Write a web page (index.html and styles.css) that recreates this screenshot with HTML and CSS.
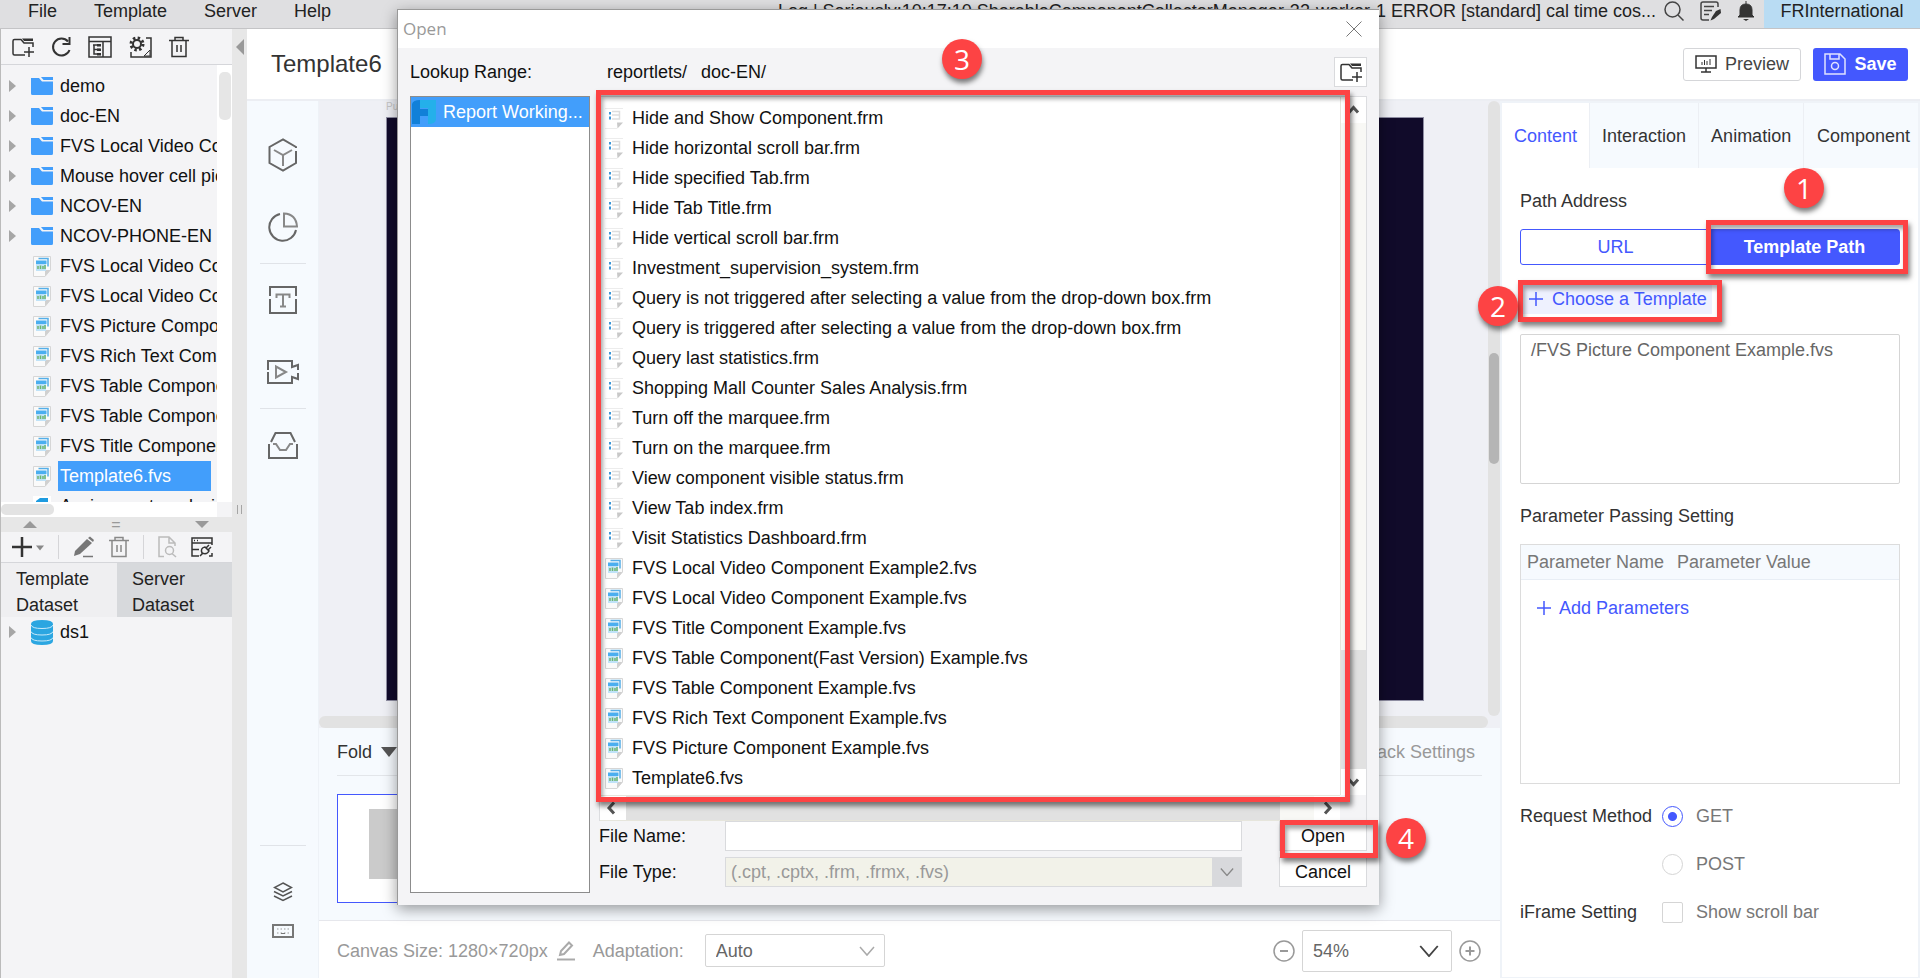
FILE: index.html
```html
<!DOCTYPE html>
<html lang="en">
<head>
    <meta charset="UTF-8">
    <meta name="viewport" content="width=device-width, initial-scale=1.0">
    <title>Template6 - Designer</title>
    <link rel="stylesheet" href="styles.css">
</head>
<body>

<!-- Shared icons -->
<svg class="sprite" aria-hidden="true">
    <symbol id="i-newfolder" viewBox="0 0 22 20">
        <path d="M13 18H2.500Q1 18 1 16.500V4Q1 2.500 2.500 2.500H9L12 6H21V10" fill="none" stroke="currentColor" stroke-width="1.500"/>
        <path d="M10 1.500H21V4H12z" fill="currentColor"/>
        <path d="M17 10V20M12 15H22" fill="none" stroke="currentColor" stroke-width="1.500"/>
    </symbol>
    <symbol id="i-trash" viewBox="0 0 20 22">
        <path d="M0 4.500H20M6 4V1.500H14V4M3 5V20.500H17V5M8 9V16M12 9V16" fill="none" stroke="currentColor" stroke-width="1.500"/>
    </symbol>
    <symbol id="i-folder" viewBox="0 0 22 18">
        <path d="M0 1H8L11 4.500H22V16.500Q22 18 20.500 18H1.500Q0 18 0 16.500z" fill="#429efb"/>
        <path d="M10 0H22V3H12.500z" fill="#429efb"/>
    </symbol>
    <symbol id="i-fvs" viewBox="0 0 18 21">
        <path d="M.5 .5H17.500V14L12 20.500H.5z" fill="#fafafa" stroke="#d6d6d6"/>
        <path d="M17.500 14H12V20.500z" fill="#d0d0d0"/>
        <path d="M5.500 2.500H15V10.500" fill="none" stroke="#55aee8" stroke-width="1.500"/>
        <path d="M3 5H13V15H3z" fill="#bfe2f8"/>
        <path d="M3 4.500H13.500V8H3z" fill="#4aaef0"/>
        <path d="M5 13V10M7.500 13V9.500M10 13V10M12 13V9" stroke="#6fb56f" stroke-width="1.500"/>
    </symbol>
    <symbol id="i-frm" viewBox="0 0 18 21">
        <path d="M0 .5H18M0 20.500H12" stroke="#ececec"/>
        <path d="M12 14.500H18L12.500 20.500z" fill="#c9c9c9"/>
        <path d="M7 3.500H14.500V11H7M7 7H14.500" fill="none" stroke="#dedede" stroke-width="1.500"/>
        <path d="M4 4H6V6.500H4zM4 8.500H6V11.500H4z" fill="#3d97d8"/>
    </symbol>
    <symbol id="i-chevron" viewBox="0 0 16 10">
        <path d="M1 1L8 9L15 1" fill="none" stroke="currentColor" stroke-width="1.500"/>
    </symbol>
    <symbol id="i-plus" viewBox="0 0 16 16">
        <path d="M8 1V15M1 8H15" fill="none" stroke="currentColor" stroke-width="1.500"/>
    </symbol>
</svg>

<div class="app">

<header class="menubar">
    <nav class="menu">
        <button>File</button>
        <button>Template</button>
        <button>Server</button>
        <button>Help</button>
    </nav>
    <span class="log">Log | Seriously:10:17:10 SharableComponentCollectorManager-32-worker-1 ERROR [standard] cal time cos...</span>
    <svg class="menu-icon" width="20" height="20" viewBox="0 0 20 20"><circle cx="8.500" cy="8.500" r="7.500" fill="none" stroke="#444" stroke-width="1.500"/><path d="M14 14L19.500 19.500" stroke="#444" stroke-width="1.500"/></svg>
    <svg class="menu-icon" width="22" height="20" viewBox="0 0 22 20"><path d="M18 6V3Q18 1 16 1H3Q1 1 1 3V17Q1 19 3 19H9M4 5.500H14M4 9.500H12M4 13.500H9" fill="none" stroke="#444" stroke-width="1.500"/><path d="M20.500 8L21 12L14 18L10.500 19.500L12 16L16 10z" fill="#333"/></svg>
    <svg class="menu-icon" width="16" height="20" viewBox="0 0 16 20"><path d="M8 0V3M2 14V9Q2 3 8 3Q14 3 14 9V14L16 16H0L2 14z" fill="#333" stroke="#333"/><path d="M5 18H11L8 20z" fill="#333"/></svg>
    <button class="account">FRInternational</button>
</header>

<div class="workspace">

    <aside class="sidebar">
        <div class="toolbar">
            <svg width="22" height="20"><use href="#i-newfolder"/></svg>
            <svg width="20" height="22" viewBox="0 0 20 22"><path d="M17 5.500A8.500 8.500 0 1 0 18.500 14" fill="none" stroke="#333" stroke-width="2"/><path d="M18.500 1V8H11.500" fill="none" stroke="#333" stroke-width="2"/></svg>
            <svg width="24" height="22" viewBox="0 0 24 22"><path d="M1 1H23V21H1zM1 5.500H23M5 9H12M6 9V18H12M6 13.500H12M15 5V21" fill="none" stroke="#333" stroke-width="1.500"/><path d="M9 8H13V10.500H9zM9 12.500H13V15H9zM9 17H13V19.500H9z" fill="#333"/></svg>
            <svg width="23" height="22" viewBox="0 0 23 22"><circle cx="8" cy="8" r="4" fill="none" stroke="#333" stroke-width="2"/><circle cx="8" cy="8" r="6" fill="none" stroke="#333" stroke-width="3" stroke-dasharray="2.400 2.300"/><path d="M17 2H22V21H2V16" fill="none" stroke="#333" stroke-width="1.500"/><path d="M15 20L21 14V20z" fill="none" stroke="#333"/></svg>
            <svg width="20" height="22"><use href="#i-trash"/></svg>
        </div>

        <div class="tree-box">
            <ul class="tree">
                <li class="open-arrow"><svg width="22" height="18"><use href="#i-folder"/></svg><span>demo</span></li>
                <li class="open-arrow"><svg width="22" height="18"><use href="#i-folder"/></svg><span>doc-EN</span></li>
                <li class="open-arrow"><svg width="22" height="18"><use href="#i-folder"/></svg><span>FVS Local Video Component</span></li>
                <li class="open-arrow"><svg width="22" height="18"><use href="#i-folder"/></svg><span>Mouse hover cell pictures</span></li>
                <li class="open-arrow"><svg width="22" height="18"><use href="#i-folder"/></svg><span>NCOV-EN</span></li>
                <li class="open-arrow"><svg width="22" height="18"><use href="#i-folder"/></svg><span>NCOV-PHONE-EN</span></li>
                <li><svg width="22" height="21"><use href="#i-fvs"/></svg><span>FVS Local Video Component Example2.fvs</span></li>
                <li><svg width="22" height="21"><use href="#i-fvs"/></svg><span>FVS Local Video Component Example.fvs</span></li>
                <li><svg width="22" height="21"><use href="#i-fvs"/></svg><span>FVS Picture Component Example.fvs</span></li>
                <li><svg width="22" height="21"><use href="#i-fvs"/></svg><span>FVS Rich Text Component Example.fvs</span></li>
                <li><svg width="22" height="21"><use href="#i-fvs"/></svg><span>FVS Table Component(Fast Version) Example.fvs</span></li>
                <li><svg width="22" height="21"><use href="#i-fvs"/></svg><span>FVS Table Component Example.fvs</span></li>
                <li><svg width="22" height="21"><use href="#i-fvs"/></svg><span>FVS Title Component Example.fvs</span></li>
                <li class="selected"><svg width="22" height="21"><use href="#i-fvs"/></svg><span>Template6.fvs</span></li>
                <li><svg width="22" height="21" viewBox="0 0 22 21"><path d="M2 0H20V21H2z" fill="#fff"/><path d="M5 5L9 2H17V19H5z" fill="#1e9be0"/></svg><span>Assignment analysis.cpt</span></li>
            </ul>
            <div class="vbar"><i></i></div>
            <div class="hbar"><i></i></div>
        </div>

        <div class="divider"><i class="up"></i><b>=</b><i class="down"></i></div>

        <div class="toolbar dataset-tools">
            <svg width="32" height="22" viewBox="0 0 32 22"><path d="M10 1V21M0 11H20" stroke="#333" stroke-width="2.500"/><path d="M24 9.500H32L28 14.500z" fill="#888"/></svg>
            <span class="sep"></span>
            <svg width="22" height="22" viewBox="0 0 22 22"><path d="M2 15L14 3L19 7L7 18L1 20z" fill="#777"/><path d="M15 2L17 .5L21 4L20 6z" fill="#777"/><path d="M10 20.500H20" stroke="#777" stroke-width="1.500"/></svg>
            <svg class="dim" width="20" height="22"><use href="#i-trash"/></svg>
            <span class="sep"></span>
            <svg width="19" height="22" viewBox="0 0 19 22"><path d="M6 20.500H1V1H11L17 7V10M11 1V7H17" fill="none" stroke="#bbb" stroke-width="1.500"/><circle cx="11.500" cy="14.500" r="4" fill="none" stroke="#bbb" stroke-width="1.500"/><path d="M14 17.500L18 21" stroke="#bbb" stroke-width="1.500"/></svg>
            <svg width="22" height="20" viewBox="0 0 22 20"><path d="M8 19H1V1H21V8M1 6H21M1 12.500H8M3 3.500H4M6 3.500H7" fill="none" stroke="#333" stroke-width="1.500"/><path d="M11 16Q9 11 14 10L18 14Q16 18 11 16z" fill="none" stroke="#333" stroke-width="1.500"/><path d="M15 11L18 8M17 13L20 10M9 19L12 16M18 19H21V16" fill="none" stroke="#333" stroke-width="1.500"/></svg>
        </div>

        <div class="dataset-tabs">
            <button class="active">Template Dataset</button>
            <button>Server Dataset</button>
        </div>
        <ul class="tree">
            <li class="open-arrow"><svg width="22" height="25" viewBox="0 0 22 25"><path d="M0 4Q0 0 11 0Q22 0 22 4V21Q22 25 11 25Q0 25 0 21z" fill="#2ba6e1"/><path d="M0 5Q1 8.500 11 8.500Q21 8.500 22 5M0 11.500Q1 15 11 15Q21 15 22 11.500M0 17.500Q1 21 11 21Q21 21 22 17.500" fill="none" stroke="#c9eafa"/></svg><span>ds1</span></li>
        </ul>
    </aside>

    <div class="splitter">
        <i class="collapse"></i>
        <b></b>
    </div>

    <div class="designer">
        <div class="titlebar">
            <h1>Template6</h1>
            <button class="preview"><svg width="22" height="18" viewBox="0 0 22 18"><path d="M1 1H21V13H1zM11 13V17M6 17H16" fill="none" stroke="#333" stroke-width="1.500"/><path d="M7 10V7M9.500 10V5M12 10V6M15 10V4" stroke="#333"/></svg>Preview</button>
            <button class="save"><svg width="22" height="22" viewBox="0 0 22 22"><path d="M1 1H16L21 6V21H1zM6 1V6H15V1" fill="none" stroke="#dfe2ff" stroke-width="1.500"/><circle cx="11" cy="13" r="3.500" fill="none" stroke="#dfe2ff" stroke-width="1.500"/></svg>Save</button>
        </div>

        <div class="design-body">
            <div class="component-bar">
                <div class="tool"><svg width="30" height="34" viewBox="0 0 30 34" fill="none" stroke="#666" stroke-width="2"><path d="M28 13V25L15 32.500L1.500 25V9L15 1.500L28 9V10"/><path d="M6 12L15 17L24 12M15 17V28" stroke="#888"/></svg></div>
                <div class="tool"><svg width="30" height="30" viewBox="0 0 30 30" fill="none" stroke="#666" stroke-width="2"><path d="M12 2A13.500 13.500 0 1 0 28 18"/><path d="M16 1.500Q28 2 29 14.500H16z" stroke="#888"/></svg></div>
                <hr>
                <div class="tool"><svg width="28" height="28" viewBox="0 0 28 28" fill="none" stroke="#666" stroke-width="2"><path d="M1 10V1H27V10M1 13V27H27V13"/><path d="M7.500 12V8.500H20.500V12M14 8.500V20M11 20.500H17" stroke="#888"/></svg></div>
                <div class="tool"><svg width="32" height="24" viewBox="0 0 32 24" fill="none" stroke="#666" stroke-width="2"><path d="M1 10V1H25V7L31 5V10M1 12V23H25V17L31 19V13"/><path d="M9 6.500V17.500L19 12z" stroke="#888"/></svg></div>
                <hr>
                <div class="tool"><svg width="30" height="27" viewBox="0 0 30 27" fill="none" stroke="#666" stroke-width="2"><path d="M3 10L7.500 1H22.500L27 10M1 12V26H29V12"/><path d="M5 12H8L12 18H18L22 12H25" stroke="#888"/></svg></div>
                <hr class="push">
                <div class="tool small"><svg width="20" height="20" viewBox="0 0 20 20" fill="none" stroke="#555" stroke-width="1.500"><path d="M10 1L18.500 5.500L10 10L1.500 5.500zM1 9.500L10 14L19 9.500M1 14L10 18.500L19 14"/></svg></div>
                <div class="tool small"><svg width="22" height="14" viewBox="0 0 22 14" fill="none" stroke="#777"><path d="M1 1H21V13H1z" stroke-width="2"/><path d="M5 5H17M5 9H17" stroke="#999" stroke-dasharray="1.500 2"/><path d="M9 9.500H13"/></svg></div>
            </div>

            <main class="center">
                <div class="canvas-area">
                    <div class="stage">
                        <span class="ruler">Pu</span>
                        <div class="canvas"></div>
                    </div>
                    <div class="scroll-v"><i></i></div>
                    <div class="scroll-h"></div>
                </div>

                <section class="pages">
                    <div class="pages-head">
                        <button class="fold">Fold <i></i></button>
                        <button class="playback">Playback Settings</button>
                    </div>
                    <div class="page-thumb"><div></div></div>
                </section>

                <footer class="statusbar">
                    <span>Canvas Size: 1280×720px</span>
                    <svg width="20" height="20" viewBox="0 0 20 20" fill="none" stroke="#aaa" stroke-width="2"><path d="M1 18.500H19"/><path d="M4 14L5 10L13 1.500L16 4.500L8 13z"/></svg>
                    <label for="adaptation">Adaptation:</label>
                    <span class="select adaptation"><select id="adaptation"><option>Auto</option></select><svg width="16" height="11"><use href="#i-chevron"/></svg></span>
                    <svg class="zoom-out" width="22" height="22" viewBox="0 0 22 22" fill="none" stroke="#999" stroke-width="1.500"><circle cx="11" cy="11" r="10"/><path d="M7 11H15" stroke-width="2"/></svg>
                    <span class="select zoom"><select aria-label="Zoom"><option>54%</option></select><svg width="20" height="13"><use href="#i-chevron"/></svg></span>
                    <svg width="22" height="22" viewBox="0 0 22 22" fill="none" stroke="#999" stroke-width="1.500"><circle cx="11" cy="11" r="10"/><path d="M6.500 11H15.500M11 6.500V15.500" stroke-width="2"/></svg>
                </footer>
            </main>

            <aside class="props">
                <div class="prop-tabs">
                    <button class="active">Content</button>
                    <button>Interaction</button>
                    <button>Animation</button>
                    <button>Component</button>
                </div>
                <div class="prop-body">
                    <label for="path">Path Address</label>
                    <div class="segmented">
                        <button>URL</button>
                        <button class="active">Template Path</button>
                        <div class="mark mark-1"></div>
                    </div>
                    <span class="callout callout-1">1</span>
                    <div class="choose-row">
                        <button class="choose"><svg width="16" height="16"><use href="#i-plus"/></svg>Choose a Template</button>
                        <div class="mark mark-2"></div>
                        <span class="callout callout-2">2</span>
                    </div>
                    <textarea id="path">/FVS Picture Component Example.fvs</textarea>
                    <h2>Parameter Passing Setting</h2>
                    <div class="params">
                        <table>
                            <thead>
                                <tr><th>Parameter Name</th><th>Parameter Value</th></tr>
                            </thead>
                        </table>
                        <button><svg width="16" height="16"><use href="#i-plus"/></svg>Add Parameters</button>
                    </div>
                    <div class="options">
                        <span>Request Method</span>
                        <label><input type="radio" name="method" checked>GET</label>
                        <label class="second"><input type="radio" name="method">POST</label>
                        <span>iFrame Setting</span>
                        <label><input type="checkbox">Show scroll bar</label>
                    </div>
                </div>
            </aside>
        </div>
    </div>
</div>
</div>

<!-- Open template dialog -->
<div class="dialog" role="dialog" aria-label="Open">
    <div class="dialog-title">
        <span>Open</span>
        <button aria-label="Close"><svg width="16" height="16" viewBox="0 0 16 16"><path d="M.5 .5L15.500 15.500M15.500 .5L.5 15.500" stroke="#777"/></svg></button>
    </div>
    <div class="dialog-body">
        <div class="lookup">
            <span class="lookup-label">Lookup Range:</span>
            <a href="#">reportlets/</a>
            <a href="#">doc-EN/</a>
            <button aria-label="New folder"><svg width="22" height="20"><use href="#i-newfolder"/></svg></button>
        </div>
        <div class="dialog-main">
            <ul class="roots">
                <li><svg width="24" height="24" viewBox="0 0 24 24"><path d="M0 4Q1 0 8 0V9H16V16H8V24H0z" fill="#1180d8"/><path d="M8 0H24V19Q24 24 16 24V8H8z" fill="#24b0ea"/></svg><span>Report Working...</span></li>
            </ul>
            <div class="files">
                <div class="file-box">
                    <ul class="file-list">
                        <li><svg width="18" height="21"><use href="#i-frm"/></svg>Hide and Show Component.frm</li>
                        <li><svg width="18" height="21"><use href="#i-frm"/></svg>Hide horizontal scroll bar.frm</li>
                        <li><svg width="18" height="21"><use href="#i-frm"/></svg>Hide specified Tab.frm</li>
                        <li><svg width="18" height="21"><use href="#i-frm"/></svg>Hide Tab Title.frm</li>
                        <li><svg width="18" height="21"><use href="#i-frm"/></svg>Hide vertical scroll bar.frm</li>
                        <li><svg width="18" height="21"><use href="#i-frm"/></svg>Investment_supervision_system.frm</li>
                        <li><svg width="18" height="21"><use href="#i-frm"/></svg>Query is not triggered after selecting a value from the drop-down box.frm</li>
                        <li><svg width="18" height="21"><use href="#i-frm"/></svg>Query is triggered after selecting a value from the drop-down box.frm</li>
                        <li><svg width="18" height="21"><use href="#i-frm"/></svg>Query last statistics.frm</li>
                        <li><svg width="18" height="21"><use href="#i-frm"/></svg>Shopping Mall Counter Sales Analysis.frm</li>
                        <li><svg width="18" height="21"><use href="#i-frm"/></svg>Turn off the marquee.frm</li>
                        <li><svg width="18" height="21"><use href="#i-frm"/></svg>Turn on the marquee.frm</li>
                        <li><svg width="18" height="21"><use href="#i-frm"/></svg>View component visible status.frm</li>
                        <li><svg width="18" height="21"><use href="#i-frm"/></svg>View Tab index.frm</li>
                        <li><svg width="18" height="21"><use href="#i-frm"/></svg>Visit Statistics Dashboard.frm</li>
                        <li><svg width="18" height="21"><use href="#i-fvs"/></svg>FVS Local Video Component Example2.fvs</li>
                        <li><svg width="18" height="21"><use href="#i-fvs"/></svg>FVS Local Video Component Example.fvs</li>
                        <li><svg width="18" height="21"><use href="#i-fvs"/></svg>FVS Title Component Example.fvs</li>
                        <li><svg width="18" height="21"><use href="#i-fvs"/></svg>FVS Table Component(Fast Version) Example.fvs</li>
                        <li><svg width="18" height="21"><use href="#i-fvs"/></svg>FVS Table Component Example.fvs</li>
                        <li><svg width="18" height="21"><use href="#i-fvs"/></svg>FVS Rich Text Component Example.fvs</li>
                        <li><svg width="18" height="21"><use href="#i-fvs"/></svg>FVS Picture Component Example.fvs</li>
                        <li><svg width="18" height="21"><use href="#i-fvs"/></svg>Template6.fvs</li>
                    </ul>
                    <div class="file-vbar">
                        <svg width="25" height="26" viewBox="0 0 25 26"><path d="M8 15.500L12.500 10.500L17 15.500" fill="none" stroke="#555" stroke-width="3"/></svg>
                        <i></i>
                        <svg width="25" height="26" viewBox="0 0 25 26"><path d="M8 10.500L12.500 15.500L17 10.500" fill="none" stroke="#555" stroke-width="3"/></svg>
                    </div>
                    <div class="file-hbar">
                        <svg width="26" height="24" viewBox="0 0 26 24"><path d="M14 6.500L9 12L14 17.500" fill="none" stroke="#555" stroke-width="3"/></svg>
                        <i></i>
                        <svg width="26" height="24" viewBox="0 0 26 24"><path d="M11 6.500L16 12L11 17.500" fill="none" stroke="#555" stroke-width="3"/></svg>
                    </div>
                    <div class="mark mark-3"></div>
                </div>
                <div class="fields">
                    <label for="file-name">File Name:</label>
                    <input type="text" id="file-name">
                    <div class="open-cell">
                        <button>Open</button>
                        <div class="mark mark-4"></div>
                        <span class="callout callout-4">4</span>
                    </div>
                    <label for="file-type">File Type:</label>
                    <span class="select file-type"><select id="file-type" disabled><option>(.cpt, .cptx, .frm, .frmx, .fvs)</option></select><svg width="14" height="9"><use href="#i-chevron"/></svg></span>
                    <button>Cancel</button>
                </div>
            </div>
        </div>
    </div>
    <span class="callout callout-3">3</span>
</div>

</body>
</html>
```
FILE: styles.css
```css
* {
    box-sizing: border-box;
}
body {
    margin: 0;
    font-family: "Liberation Sans", Arial, sans-serif;
    font-size: 18px;
    line-height: 20px;
    color: #222;
    position: relative;
    overflow: hidden;
}
button, input, select, textarea {
    font: inherit;
    color: inherit;
    margin: 0;
}
button {
    background: none;
    border: none;
    padding: 0;
    cursor: pointer;
}
ul {
    list-style: none;
    margin: 0;
    padding: 0;
}
svg {
    display: block;
    flex: none;
}
.sprite {
    position: absolute;
    width: 0;
    height: 0;
}
.app {
    display: flex;
    flex-direction: column;
    height: 100vh;
}

/* Menu bar */
.menubar {
    display: flex;
    align-items: center;
    height: 29px;
    flex: none;
    background-color: #dfdfe1;
    border-bottom: 1px solid #c4c4c6;
}
.menu {
    display: flex;
    gap: 37px;
    padding-left: 28px;
    flex: 1;
}
.menu button, .log, .menu-icon {
    margin-bottom: 7px;
}
.log {
    white-space: nowrap;
}
.menu-icon {
    margin-left: 8px;
}
.menu-icon + .menu-icon {
    margin-left: 16px;
}
.account {
    align-self: stretch;
    width: 156px;
    margin-left: 10px;
    padding-bottom: 7px;
    background-color: #b9dcf3;
}

.workspace {
    display: flex;
    flex: 1;
    min-height: 0;
}

/* Left sidebar */
.sidebar {
    width: 232px;
    flex: none;
    background-color: #f4f4f6;
    border-left: 1px solid #bbb;
}
.toolbar {
    display: flex;
    align-items: center;
    gap: 17px;
    height: 36px;
    padding-left: 11px;
    border-bottom: 1px solid #d5d6da;
    color: #333;
}
.tree-box {
    display: grid;
    grid-template-columns: 1fr 15px;
    grid-template-rows: 437px 15px;
}
.tree-box .tree {
    padding-top: 6px;
}
.tree {
    overflow: hidden;
}
.tree li {
    display: flex;
    align-items: center;
    height: 30px;
    padding-left: 30px;
    white-space: nowrap;
    color: #111;
}
.tree li.open-arrow {
    padding-left: 8px;
}
.tree li.open-arrow::before {
    content: "";
    border: 6px solid transparent;
    border-left: 7px solid #a6a6a6;
    border-right-width: 0;
    margin-right: 15px;
}
.tree li span {
    padding: 5px 0 5px 2px;
    margin-left: 5px;
}
.tree li.selected span {
    background-color: #429efb;
    color: #fff;
    width: 153px;
}
.vbar {
    background-color: #fff;
    padding: 7px 1px 0 2px;
}
.vbar i {
    display: block;
    height: 48px;
    border-radius: 5px;
    background-color: #e6e6e6;
}
.hbar {
    background-color: #fff;
    padding: 2px 0;
}
.hbar i {
    display: block;
    width: 53px;
    height: 11px;
    border-radius: 5px;
    background-color: #e3e3e3;
}
.divider {
    display: flex;
    justify-content: space-between;
    align-items: center;
    height: 15px;
    padding: 0 23px 0 22px;
    background-color: #e7e7e7;
    color: #999;
    font-size: 16px;
}
.divider b {
    font-weight: normal;
}
.up, .down {
    border: 7px solid transparent;
}
.up {
    border-top-width: 0;
    border-bottom-color: #999;
}
.down {
    border-bottom-width: 0;
    border-top-color: #999;
}
.dataset-tools {
    height: 31px;
    gap: 14px;
}
.dim {
    color: #888;
}
.sep {
    width: 1px;
    height: 24px;
    background-color: #d5d5d8;
}
.dataset-tabs {
    display: grid;
    grid-template-columns: 116px 1fr;
}
.dataset-tabs button {
    height: 54px;
    background-color: #d7d9dc;
    padding: 3px 30px 0 15px;
    text-align: left;
    line-height: 26px;
}
.dataset-tabs .active {
    background-color: #efeff1;
}

.splitter {
    display: flex;
    flex-direction: column;
    justify-content: space-between;
    align-items: center;
    width: 15px;
    flex: none;
    background-color: #e7e7e7;
    padding: 10px 0 464px;
}
.collapse {
    border: 8px solid transparent;
    border-left-width: 0;
    border-right-color: #999;
}
.splitter b {
    width: 5px;
    height: 9px;
    border: 1px solid #a5a5a5;
    border-width: 0 1px;
}

/* Designer */
.designer {
    flex: 1;
    min-width: 0;
    display: flex;
    flex-direction: column;
    background-color: #fff;
}
.titlebar {
    display: flex;
    align-items: center;
    gap: 12px;
    height: 72px;
    flex: none;
    padding: 0 12px 0 24px;
    border-bottom: 2px solid #eceef3;
}
.titlebar h1 {
    flex: 1;
    margin: 0;
    font-size: 24px;
    font-weight: normal;
    color: #333;
}
.preview, .save {
    display: flex;
    align-items: center;
    justify-content: center;
    gap: 8px;
    height: 33px;
    border-radius: 3px;
}
.preview {
    width: 118px;
    border: 1px solid #d5d6d9;
    color: #444;
}
.save {
    width: 95px;
    background-color: #4458fe;
    color: #fff;
    font-weight: bold;
}
.design-body {
    display: flex;
    flex: 1;
    min-height: 0;
}
.component-bar {
    display: flex;
    flex-direction: column;
    align-items: center;
    width: 72px;
    flex: none;
    padding: 18px 0 28px;
    background-color: #f6fafe;
    border-right: 1px solid #eef2f7;
}
.tool {
    display: flex;
    align-items: center;
    justify-content: center;
    height: 72px;
}
.tool.small {
    height: 39px;
}
.component-bar hr {
    width: 46px;
    margin: 0;
    border: none;
    border-top: 1px solid #e0e3e8;
}
.component-bar hr.push {
    margin-top: auto;
    margin-bottom: 26px;
}
.center {
    flex: 1;
    min-width: 0;
    display: flex;
    flex-direction: column;
}
.canvas-area {
    display: grid;
    grid-template-columns: 1fr 12px;
    grid-template-rows: 1fr 12px;
    flex: 1;
    background-color: #eff0f5;
}
.stage {
    display: flex;
    flex-direction: column;
    padding: 0 64px 15px 67px;
}
.ruler {
    height: 16px;
    line-height: 12px;
    font-size: 10px;
    color: #c5c5c5;
}
.canvas {
    flex: 1;
    background-color: #110b2a;
    border: 1px solid #8f8ea3;
}
.scroll-v, .scroll-h {
    background-color: #e2e2e2;
    border-radius: 6px;
}
.scroll-v {
    padding: 252px 1px 0;
}
.scroll-v i {
    display: block;
    height: 111px;
    border-radius: 5px;
    background-color: #b5b5b5;
}
.pages {
    height: 192px;
    flex: none;
    padding: 0 18px;
    background-color: #f6fafe;
}
.pages-head {
    display: flex;
    justify-content: space-between;
    align-items: center;
    height: 48px;
    border-bottom: 1px solid #e3e6ea;
}
.fold {
    display: flex;
    align-items: center;
    gap: 9px;
    color: #333;
}
.fold i {
    border: 8px solid transparent;
    border-top: 10px solid #555;
    border-bottom-width: 0;
}
.playback {
    color: #999;
    padding-right: 7px;
}
.page-thumb {
    width: 192px;
    height: 109px;
    margin-top: 18px;
    padding: 14px 31px 22px;
    background-color: #fff;
    border: 1px solid #4458fe;
}
.page-thumb div {
    height: 70px;
    background-color: #cbcbcb;
}
.statusbar {
    display: flex;
    align-items: center;
    height: 58px;
    flex: none;
    padding: 2px 19px 0 18px;
    border-top: 1px solid #e6e7ec;
    color: #999;
}
.statusbar svg {
    margin: 0 8px;
}
.statusbar label {
    margin-left: 9px;
    margin-right: 21px;
}
.select {
    position: relative;
    display: block;
}
.select select {
    display: block;
    width: 100%;
    height: 100%;
    appearance: none;
    background-color: #fff;
    border: 1px solid #d5d5d5;
    border-radius: 2px;
    padding: 0 10px;
    color: #666;
    opacity: 1;
}
.select svg {
    position: absolute;
    top: 50%;
    right: 10px;
    transform: translateY(-50%);
    margin: 0;
    color: #aaa;
    pointer-events: none;
}
.adaptation {
    width: 180px;
    height: 33px;
}
.zoom {
    width: 150px;
    height: 42px;
}
.zoom svg {
    right: 13px;
    color: #444;
}
.statusbar .zoom-out {
    margin-left: auto;
    margin-right: 7px;
}
.statusbar > svg:last-child {
    margin: 0 0 0 7px;
}

/* Right properties panel */
.props {
    width: 420px;
    flex: none;
    border: 2px solid #eff3f8;
    border-bottom-width: 1px;
}
.prop-tabs {
    display: flex;
    height: 65px;
    background-color: #f6fafe;
}
.prop-tabs button {
    padding: 0 12px;
    border-right: 1px solid #eceff4;
    color: #333;
}
.prop-tabs button:last-child {
    flex: 1;
    border: none;
    padding: 0 0 0 5px;
}
.prop-tabs .active {
    background-color: #fff;
    color: #4458fe;
}
.prop-body {
    position: relative;
    display: flex;
    flex-direction: column;
    padding: 23px 18px 0;
    color: #333;
}
.segmented {
    position: relative;
    display: grid;
    grid-template-columns: 1fr 1fr;
    height: 36px;
    margin: 18px 0 20px;
    border: 1px solid #4458fe;
    border-radius: 3px;
    color: #4458fe;
}
.segmented .active {
    background-color: #4458fe;
    color: #fff;
    font-weight: bold;
}
.choose-row {
    position: relative;
}
.choose {
    display: flex;
    align-items: center;
    gap: 8px;
    height: 29px;
    padding: 0 5px 2px 8px;
    background-color: #eef1fe;
    color: #4458fe;
}
.prop-body textarea {
    height: 150px;
    margin: 20px 0 22px;
    padding: 5px 10px;
    border: 1px solid #d5d5d5;
    border-radius: 2px;
    resize: none;
    color: #666;
}
.prop-body h2 {
    margin: 0 0 18px;
    font-size: 18px;
    font-weight: normal;
}
.params {
    height: 240px;
    border: 1px solid #dcdcdc;
    color: #777;
}
.params table {
    width: 100%;
    border-collapse: collapse;
    background-color: #f6fafe;
    border-bottom: 1px solid #e8eef5;
}
.params th {
    height: 34px;
    padding: 0 0 0 6px;
    font-weight: normal;
    text-align: left;
}
.params th:first-child {
    width: 150px;
}
.params button {
    display: flex;
    align-items: center;
    gap: 7px;
    margin: 18px 0 0 15px;
    color: #4458fe;
}
.options {
    display: grid;
    grid-template-columns: 142px 1fr;
    align-items: center;
    grid-auto-rows: 48px;
    margin-top: 8px;
}
.options label {
    display: flex;
    align-items: center;
    gap: 13px;
    color: #777;
}
.options .second {
    grid-column: 2;
}
.options input {
    appearance: none;
    width: 21px;
    height: 21px;
    border: 1px solid #d5d5d5;
    border-radius: 2px;
    background-color: #fff;
}
.options input[type="radio"] {
    border-radius: 50%;
}
.options input[type="radio"]:checked {
    border-color: #4458fe;
    background: radial-gradient(circle, #4458fe 4px, #fff 5px);
}

/* Open dialog */
.dialog {
    position: absolute;
    left: 397px;
    top: 9px;
    width: 982px;
    background-color: #f4f4f6;
    border: 1px solid #999;
    border-width: 1px 0 0 1px;
    box-shadow: 0 4px 14px rgba(0, 0, 0, 0.4);
    color: #111;
}
.dialog-title {
    display: flex;
    justify-content: space-between;
    align-items: center;
    height: 38px;
    padding: 0 17px 0 5px;
    background-color: #fff;
    font-family: "Open Sans", sans-serif;
    font-size: 17px;
    color: #999;
}
.dialog-body {
    padding: 9px 12px 12px;
}
.lookup {
    display: flex;
    align-items: center;
    height: 30px;
}
.lookup a {
    color: inherit;
    text-decoration: none;
    margin-right: 14px;
}
.lookup-label {
    width: 197px;
    flex: none;
}
.lookup button {
    display: flex;
    align-items: center;
    justify-content: center;
    width: 33px;
    height: 30px;
    margin-left: auto;
    background-color: #fff;
    border: 1px solid #d9dadd;
    color: #333;
}
.dialog-main {
    display: flex;
    gap: 9px;
    margin-top: 9px;
}
.roots {
    width: 180px;
    height: 797px;
    flex: none;
    background-color: #fff;
    border: 1px solid #8c8c8c;
}
.roots li {
    display: flex;
    align-items: center;
    gap: 7px;
    height: 30px;
    padding-left: 1px;
    background-color: #429efb;
    color: #fff;
    white-space: nowrap;
}
.files {
    flex: 1;
    min-width: 0;
}
.file-box {
    position: relative;
    display: grid;
    grid-template-columns: 1fr 26px;
    grid-template-rows: 698px 26px;
    border: 1px solid #dcdde0;
    border-bottom: none;
}
.file-list {
    background-color: #fff;
    padding: 6px 0 0 5px;
    overflow: hidden;
}
.file-list li {
    display: flex;
    align-items: center;
    gap: 9px;
    height: 30px;
    white-space: nowrap;
}
.file-vbar {
    display: flex;
    flex-direction: column;
    justify-content: space-between;
    background-color: #f8f8f5;
    border-left: 1px solid #e6e5dc;
}
.file-vbar svg, .file-hbar svg {
    background-color: #fff;
}
.file-vbar i {
    height: 119px;
    margin-top: auto;
    background-color: #e1e1e1;
}
.file-hbar {
    display: flex;
    align-items: center;
    background-color: #f8f8f5;
    border-top: 1px solid #e6e5dc;
    border-bottom: 1px solid #e6e5dc;
}
.file-hbar i {
    width: 654px;
    height: 24px;
    margin-right: auto;
    background-color: #e1e1e1;
}
.fields {
    display: grid;
    grid-template-columns: 126px 1fr 88px;
    grid-auto-rows: 30px;
    row-gap: 6px;
    align-items: stretch;
}
.fields label {
    line-height: 30px;
}
.fields input {
    width: auto;
    min-width: 0;
    margin-right: 37px;
    border: 1px solid #d9dadd;
    background-color: #fff;
}
.fields button {
    width: 100%;
    height: 30px;
    background-color: #fff;
    border: 1px solid #d9dadd;
}
.open-cell {
    position: relative;
}
.file-type {
    margin-right: 37px;
    background: linear-gradient(#d8d9dc, #d8d9dc) right / 30px 100% no-repeat #f2f2e9;
}
.file-type select {
    padding: 0 5px;
    border-radius: 0;
    background: none;
    border-color: #d9dadd;
    color: #999;
}
.file-type svg {
    right: 8px;
    color: #888;
}

/* Step markers */
.mark {
    position: absolute;
    border: 5px solid #fd4344;
    box-shadow: 2px 4px 5px rgba(0, 0, 0, 0.5), inset 2px 4px 4px rgba(0, 0, 0, 0.35);
    pointer-events: none;
}
.callout {
    position: absolute;
    width: 40px;
    height: 40px;
    border-radius: 50%;
    background-color: #fd4344;
    box-shadow: 1px 4px 5px rgba(0, 0, 0, 0.5);
    color: #fff;
    font-family: "Open Sans", sans-serif;
    font-size: 28px;
    line-height: 40px;
    text-align: center;
}
.mark-1 {
    top: -10px;
    right: -9px;
    width: 202px;
    height: 54px;
}
.mark-2 {
    top: -5px;
    left: -2px;
    width: 204px;
    height: 42px;
}
.mark-3 {
    top: -7px;
    left: -4px;
    width: 754px;
    height: 712px;
}
.mark-4 {
    top: -1px;
    left: 1px;
    width: 98px;
    height: 38px;
}
.callout-1 {
    top: 0;
    right: 94px;
}
.callout-2 {
    top: 1px;
    left: -42px;
}
.callout-3 {
    top: 29px;
    left: 544px;
}
.callout-4 {
    top: -3px;
    left: 107px;
}
```
